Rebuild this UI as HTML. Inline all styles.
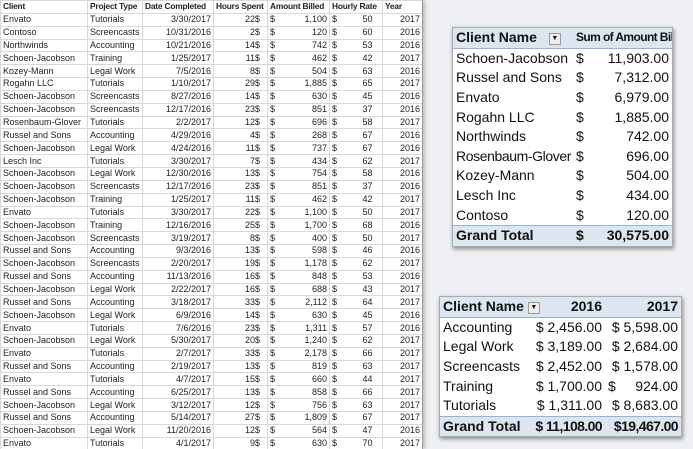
<!DOCTYPE html>
<html><head><style>
body{margin:0;width:693px;height:449px;overflow:hidden;background:#eef0f5;font-family:"Liberation Sans",sans-serif;position:relative}
#sheet{position:absolute;left:0;top:0;width:422px;height:449px;background:#fff;border-right:1px solid #999;box-shadow:2px 0 4px #bbb;overflow:hidden}
#sheet table{border-collapse:collapse;font-size:9px;color:#222;table-layout:fixed;width:422px}
#sheet tr{height:12.85px}
#sheet td{border:1px solid #d8d8d8;padding:0 2px;white-space:nowrap;overflow:hidden;line-height:11px;height:10.85px}
#sheet tr:first-child td{font-weight:bold;font-size:8.4px;letter-spacing:-0.2px}
.r{text-align:right}
.pv{position:absolute;background:#fff;box-shadow:1px 2px 4px #888;border:1px solid #aaa;font-size:14px;color:#111;overflow:hidden}
.pv table{border-collapse:collapse;width:100%;table-layout:fixed;font-size:inherit}
.pv td{height:19.6px;padding:0 3px;white-space:nowrap;line-height:19px;overflow:visible}
.pv tr.h td,.pv tr.g td{background:#dce6f1;font-weight:bold}
.pv tr.h td{border-bottom:1px solid #95b3d7}
.pv tr.g td{border-top:1px solid #95b3d7}
.f{display:inline-block;width:10px;height:10px;border:1px solid #999;background:#eee;font-size:7px;line-height:10px;text-align:center;vertical-align:middle}
</style></head><body>
<div id="sheet"><table>
<colgroup><col style="width:87px"><col style="width:55px"><col style="width:71px"><col style="width:54px"><col style="width:62px"><col style="width:53px"><col style="width:40px"></colgroup>
<tr><td>Client</td><td>Project Type</td><td>Date Completed</td><td>Hours Spent</td><td>Amount Billed</td><td>Hourly Rate</td><td>Year</td></tr>
<script>
var d=`Envato|Tutorials|3/30/2017|22|1,100|50|2017
Contoso|Screencasts|10/31/2016|2|120|60|2016
Northwinds|Accounting|10/21/2016|14|742|53|2016
Schoen-Jacobson|Training|1/25/2017|11|462|42|2017
Kozey-Mann|Legal Work|7/5/2016|8|504|63|2016
Rogahn LLC|Tutorials|1/10/2017|29|1,885|65|2017
Schoen-Jacobson|Screencasts|8/27/2016|14|630|45|2016
Schoen-Jacobson|Screencasts|12/17/2016|23|851|37|2016
Rosenbaum-Glover|Tutorials|2/2/2017|12|696|58|2017
Russel and Sons|Accounting|4/29/2016|4|268|67|2016
Schoen-Jacobson|Legal Work|4/24/2016|11|737|67|2016
Lesch Inc|Tutorials|3/30/2017|7|434|62|2017
Schoen-Jacobson|Legal Work|12/30/2016|13|754|58|2016
Schoen-Jacobson|Screencasts|12/17/2016|23|851|37|2016
Schoen-Jacobson|Training|1/25/2017|11|462|42|2017
Envato|Tutorials|3/30/2017|22|1,100|50|2017
Schoen-Jacobson|Training|12/16/2016|25|1,700|68|2016
Schoen-Jacobson|Screencasts|3/19/2017|8|400|50|2017
Russel and Sons|Accounting|9/3/2016|13|598|46|2016
Schoen-Jacobson|Screencasts|2/20/2017|19|1,178|62|2017
Russel and Sons|Accounting|11/13/2016|16|848|53|2016
Schoen-Jacobson|Legal Work|2/22/2017|16|688|43|2017
Russel and Sons|Accounting|3/18/2017|33|2,112|64|2017
Schoen-Jacobson|Legal Work|6/9/2016|14|630|45|2016
Envato|Tutorials|7/6/2016|23|1,311|57|2016
Schoen-Jacobson|Legal Work|5/30/2017|20|1,240|62|2017
Envato|Tutorials|2/7/2017|33|2,178|66|2017
Russel and Sons|Accounting|2/19/2017|13|819|63|2017
Envato|Tutorials|4/7/2017|15|660|44|2017
Russel and Sons|Accounting|6/25/2017|13|858|66|2017
Schoen-Jacobson|Legal Work|3/12/2017|12|756|63|2017
Russel and Sons|Accounting|5/14/2017|27|1,809|67|2017
Schoen-Jacobson|Legal Work|11/20/2016|12|564|47|2016
Envato|Tutorials|4/1/2017|9|630|70|2017`.split("\n");
d.forEach(function(l){var a=l.split("|");document.write('<tr><td>'+a[0]+'</td><td>'+a[1]+'</td><td class="r">'+a[2]+'</td><td class="r">'+a[3]+' <span style="float:right;width:10px;text-align:left">$</span></td><td class="r"><span style="float:left">$</span>'+a[4]+'</td><td class="r"><span style="float:left">$</span>'+a[5]+'&nbsp;&nbsp;&nbsp;</td><td class="r">'+a[6]+'</td></tr>')});
</script>
</table></div>

<div class="pv" style="left:452px;top:27px;width:219px">
<table>
<colgroup><col style="width:120px"><col style="width:20px"><col style="width:79px"></colgroup>
<tr class="h"><td>Client Name <span class="f" style="margin-left:8px">&#9660;</span></td><td colspan="2" style="text-align:right;font-size:12px;letter-spacing:-0.6px">Sum of Amount Billed</td></tr>
<tr><td>Schoen-Jacobson</td><td>$</td><td class="r">11,903.00</td></tr>
<tr><td>Russel and Sons</td><td>$</td><td class="r">7,312.00</td></tr>
<tr><td>Envato</td><td>$</td><td class="r">6,979.00</td></tr>
<tr><td>Rogahn LLC</td><td>$</td><td class="r">1,885.00</td></tr>
<tr><td>Northwinds</td><td>$</td><td class="r">742.00</td></tr>
<tr><td style="letter-spacing:-0.4px">Rosenbaum-Glover</td><td>$</td><td class="r">696.00</td></tr>
<tr><td>Kozey-Mann</td><td>$</td><td class="r">504.00</td></tr>
<tr><td>Lesch Inc</td><td>$</td><td class="r">434.00</td></tr>
<tr><td>Contoso</td><td>$</td><td class="r">120.00</td></tr>
<tr class="g"><td>Grand Total</td><td>$</td><td class="r">30,575.00</td></tr>
</table></div>

<div class="pv" style="left:439px;top:296px;width:241px">
<table>
<colgroup><col style="width:88px"><col style="width:77px"><col style="width:76px"></colgroup>
<tr class="h"><td>Client Name <span class="f">&#9660;</span></td><td class="r">2016</td><td class="r">2017</td></tr>
<tr><td>Accounting</td><td class="r">$ 2,456.00</td><td class="r">$ 5,598.00</td></tr>
<tr><td>Legal Work</td><td class="r">$ 3,189.00</td><td class="r">$ 2,684.00</td></tr>
<tr><td>Screencasts</td><td class="r">$ 2,452.00</td><td class="r">$ 1,578.00</td></tr>
<tr><td>Training</td><td class="r">$ 1,700.00</td><td class="r">$ &nbsp;&nbsp;&nbsp;&nbsp;924.00</td></tr>
<tr><td>Tutorials</td><td class="r">$ 1,311.00</td><td class="r">$ 8,683.00</td></tr>
<tr class="g"><td>Grand Total</td><td class="r" style="letter-spacing:-0.6px">$ 11,108.00</td><td class="r" style="letter-spacing:-0.6px">$19,467.00</td></tr>
</table></div>
</body></html>
